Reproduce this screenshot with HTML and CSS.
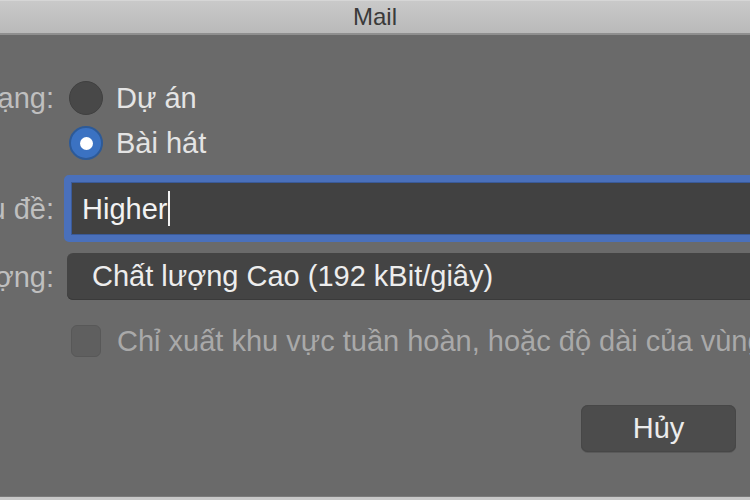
FILE: index.html
```html
<!DOCTYPE html>
<html lang="vi">
<head>
<meta charset="utf-8">
<title>Mail</title>
<link rel="stylesheet" href="styles.css">
</head>
<body>
<div class="window">
  <div class="titlebar">Mail</div>
  <div class="content">
    <div class="row row-radio">
      <div class="label">Định dạng:</div>
      <div class="radio-wrap">
        <span class="radio"></span>
        <span class="radio-text">Dự án</span>
      </div>
    </div>
    <div class="row row-radio row-radio2">
      <div class="label"></div>
      <div class="radio-wrap">
        <span class="radio radio-on"><span class="dot"></span></span>
        <span class="radio-text">Bài hát</span>
      </div>
    </div>
    <div class="row row-input">
      <div class="label">Tiêu đề:</div>
      <div class="input"><span class="input-text">Higher</span><span class="caret"></span></div>
    </div>
    <div class="row row-select">
      <div class="label">Chất lượng:</div>
      <div class="select">Chất lượng Cao (192 kBit/giây)</div>
    </div>
    <div class="row row-check">
      <div class="label"></div>
      <div class="check-wrap">
        <span class="checkbox"></span>
        <span class="check-text">Chỉ xuất khu vực tuần hoàn, hoặc độ dài của vùng</span>
      </div>
    </div>
    <div class="row-buttons">
      <div class="button">Hủy</div>
      <div class="button button-primary">Xuất</div>
    </div>
  </div>
  <div class="bottom-edge"></div>
</div>
</body>
</html>
```

FILE: styles.css
```css
html, body {
  margin: 0;
  padding: 0;
  width: 750px;
  height: 500px;
  overflow: hidden;
  background: #6a6a6a;
}

.window {
  width: 750px;
  height: 500px;
  display: flex;
  flex-direction: column;
  font-family: "Liberation Sans", Arial, sans-serif;
  font-size: 29px;
  overflow: hidden;
}

.titlebar {
  height: 32px;
  flex: none;
  background: linear-gradient(#c9c9c9, #b9b9b9);
  border-top: 1px solid #d6d6d6;
  border-bottom: 2px solid #8f8f8f;
  color: #3a3a3a;
  font-size: 24px;
  line-height: 32px;
  text-align: center;
}

.content {
  flex: 1;
  padding-top: 46px;
  display: flex;
  flex-direction: column;
}

.row {
  display: flex;
  align-items: center;
  white-space: nowrap;
}

.label {
  width: 54px;
  flex: none;
  display: flex;
  justify-content: flex-end;
  color: #bfbfbf;
  line-height: 34px;
}

.row-radio {
  height: 34px;
}

.row-radio2 {
  margin-top: 11px;
}

.radio-wrap {
  display: flex;
  align-items: center;
  margin-left: 15px;
}

.radio {
  width: 34px;
  height: 34px;
  box-sizing: border-box;
  border-radius: 50%;
  background: #484848;
  border: 1px solid #404040;
  display: flex;
  align-items: center;
  justify-content: center;
}

.radio-on {
  background: #3b72c2;
  border: 2px solid #2d5a98;
}

.dot {
  width: 13px;
  height: 13px;
  border-radius: 50%;
  background: #ffffff;
}

.radio-text {
  margin-left: 13px;
  color: #e4e4e4;
  line-height: 34px;
}

.row-input {
  margin-top: 15px;
  height: 67px;
}

.input {
  margin-left: 10px;
  height: 67px;
  width: 760px;
  flex: none;
  box-sizing: border-box;
  border: 7px solid #4a70bb;
  border-radius: 5px;
  background: #414141;
  box-shadow: inset 0 0 0 1px #3a5a98;
  display: flex;
  align-items: center;
  padding-left: 11px;
}

.input-text {
  color: #f2f2f2;
  line-height: 34px;
}

.caret {
  width: 2px;
  height: 35px;
  background: #f2f2f2;
  margin-left: 1px;
}

.row-select {
  margin-top: 11px;
  height: 47px;
}

.select {
  margin-left: 13px;
  height: 47px;
  width: 760px;
  flex: none;
  box-sizing: border-box;
  background: #444444;
  border-radius: 6px;
  box-shadow: inset 0 -1px 0 #3a3a3a;
  color: #ededed;
  line-height: 47px;
  padding-left: 25px;
}

.row-check {
  margin-top: 25px;
  height: 32px;
}

.check-wrap {
  margin-left: 17px;
  display: flex;
  align-items: center;
}

.checkbox {
  width: 30px;
  height: 32px;
  box-sizing: border-box;
  background: #5f5f5f;
  border: 1px solid #585858;
  border-radius: 6px;
  flex: none;
}

.check-text {
  margin-left: 16px;
  color: #a9a9a9;
  line-height: 32px;
}

.row-buttons {
  margin-top: 48px;
  display: flex;
  gap: 20px;
  padding-left: 581px;
}

.button {
  width: 155px;
  height: 47px;
  flex: none;
  box-sizing: border-box;
  background: #4c4c4c;
  border-radius: 7px;
  box-shadow: 0 1px 0 #5a5a5a, inset 0 0 0 1px #474747;
  color: #ececec;
  text-align: center;
  line-height: 47px;
}

.button-primary {
  background: #3b72c2;
}

.bottom-edge {
  height: 3px;
  flex: none;
  background: #c8c8c8;
  border-top: 1px solid #7a7a7a;
}
```
